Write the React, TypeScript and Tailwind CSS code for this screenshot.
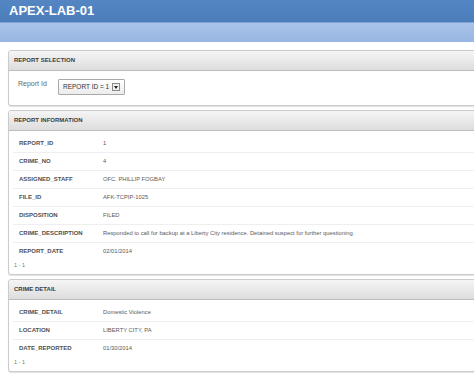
import React from "react";

const font = { fontFamily: '"Liberation Sans", Arial, sans-serif' };

function Panel({ title, children }: { title: string; children: React.ReactNode }) {
  return (
    <div className="w-[520px] border border-[#cbcbcb] rounded-[3px] bg-white shadow-[0_1px_1px_rgba(0,0,0,0.12)]">
      <div className="h-[20px] flex items-center pl-[5px] bg-gradient-to-b from-[#f5f5f5] to-[#dddddd] border-b border-[#bdbdbd] rounded-t-[3px]">
        <span className="text-[6px] font-bold text-[#3b3b3b]">{title}</span>
      </div>
      {children}
    </div>
  );
}

function Rows({ rows }: { rows: [string, string][] }) {
  return (
    <div className="pt-[3px] px-[4px]">
      {rows.map(([k, v], i) => (
        <div
          key={k}
          className={`h-[18px] flex items-center ${i > 0 ? "border-t border-[#efefef]" : ""}`}
        >
          <div className="w-[90px] pl-[6px] text-[6px] font-bold text-[#505050]">{k}</div>
          <div className="text-[5.8px] text-[#5a5a5a] whitespace-nowrap">{v}</div>
        </div>
      ))}
      <div className="h-[14px] pl-[1px] pt-[1px] text-[5.5px] text-[#777] leading-[8px]">1 - 1</div>
    </div>
  );
}

export default function App() {
  return (
    <div className="w-[474px] h-[375px] overflow-hidden bg-white" style={font}>
      <div className="h-[22px] flex items-center pl-[9px] bg-gradient-to-b from-[#5586c4] to-[#4c7dbb]">
        <span className="text-white font-bold text-[13px]">APEX-LAB-01</span>
      </div>
      <div className="h-[20px] bg-gradient-to-b from-[#a9c4ea] to-[#98b6e2] border-t border-[#7fa3d6]" />
      <div className="pt-[8px] pl-[8px] flex flex-col gap-[4px]">
        <Panel title="REPORT SELECTION">
          <div className="h-[34px] flex items-center pl-[9px] pb-[2px]">
            <span className="text-[7px] text-[#666] w-[40px] -mt-[6px]">Report Id</span>
            <div className="h-[16px] w-[67px] flex items-center pl-[4px] pr-[4px] border border-[#a9a9a9] bg-gradient-to-b from-[#ffffff] to-[#ececec] rounded-[1px]">
              <span className="text-[6.5px] text-[#333] whitespace-nowrap">REPORT ID = 1</span>
              <span className="ml-auto shrink-0 w-[8px] h-[8px] border border-[#8a8a8a] bg-[#f0f0f0] flex items-center justify-center">
                <svg width="4" height="3" viewBox="0 0 4 3">
                  <path d="M0 0h4L2 3z" fill="#222" />
                </svg>
              </span>
            </div>
          </div>
        </Panel>
        <Panel title="REPORT INFORMATION">
          <Rows
            rows={[
              ["REPORT_ID", "1"],
              ["CRIME_NO", "4"],
              ["ASSIGNED_STAFF", "OFC. PHILLIP FOGBAY"],
              ["FILE_ID", "AFK-TCPIP-1025"],
              ["DISPOSITION", "FILED"],
              ["CRIME_DESCRIPTION", "Responded to call for backup at a Liberty City residence. Detained suspect for further questioning."],
              ["REPORT_DATE", "02/01/2014"],
            ]}
          />
        </Panel>
        <Panel title="CRIME DETAIL">
          <Rows
            rows={[
              ["CRIME_DETAIL", "Domestic Violence"],
              ["LOCATION", "LIBERTY CITY, PA"],
              ["DATE_REPORTED", "01/30/2014"],
            ]}
          />
        </Panel>
      </div>
    </div>
  );
}
